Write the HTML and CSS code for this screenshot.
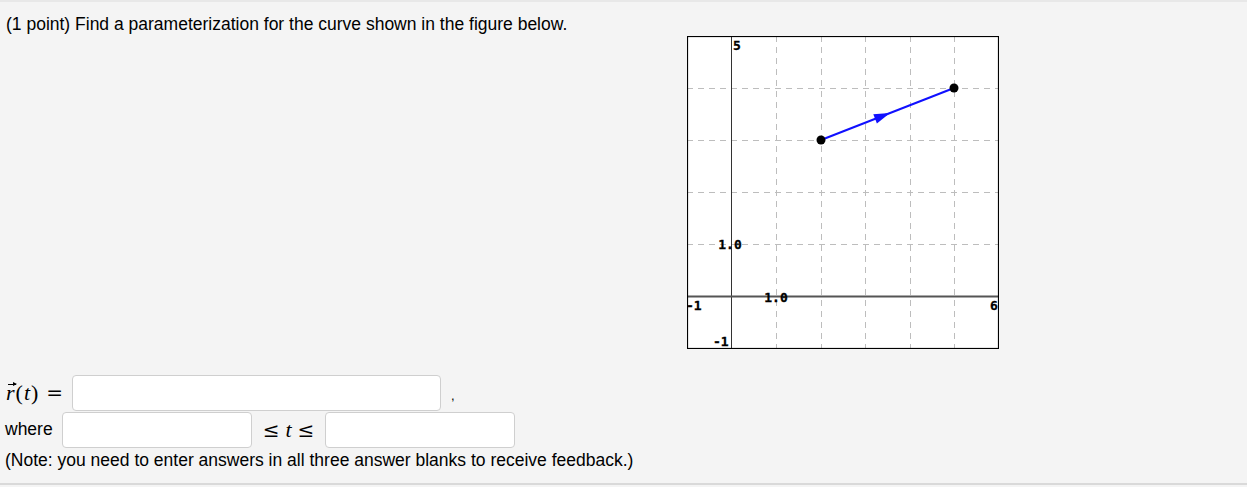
FILE: index.html
```html
<!DOCTYPE html>
<html>
<head>
<meta charset="utf-8">
<link rel="stylesheet" href="styles.css">
</head>
<body>
<div class="page">
  <p class="prompt">(1 point) Find a parameterization for the curve shown in the figure below.</p>
  <div class="figure">
    <svg width="312" height="313" viewBox="0 0 312 313">
      <rect x="0.5" y="0.5" width="311" height="312" fill="#fff"/>
      <g stroke="#bdbdbd" stroke-width="1" stroke-dasharray="6,5">
        <line x1="89.5" y1="0" x2="89.5" y2="312"/>
        <line x1="134.5" y1="0" x2="134.5" y2="312"/>
        <line x1="178.5" y1="0" x2="178.5" y2="312"/>
        <line x1="223.5" y1="0" x2="223.5" y2="312"/>
        <line x1="267.5" y1="0" x2="267.5" y2="312"/>
        <line x1="0" y1="52.5" x2="312" y2="52.5"/>
        <line x1="0" y1="104.5" x2="312" y2="104.5"/>
        <line x1="0" y1="156.5" x2="312" y2="156.5"/>
        <line x1="0" y1="208.5" x2="312" y2="208.5"/>
      </g>
      <line x1="44.5" y1="0" x2="44.5" y2="312" stroke="#333" stroke-width="1"/>
      <line x1="0" y1="260.5" x2="312" y2="260.5" stroke="#555" stroke-width="2"/>
      <rect x="0.5" y="0.5" width="311" height="312" fill="none" stroke="#000" stroke-width="1.2"/>
      <g font-family="DejaVu Sans Mono, monospace" font-weight="bold" font-size="13" fill="#000" stroke="#000" stroke-width="0.3">
        <text x="46" y="14">5</text>
        <text x="43" y="213" text-anchor="middle">1.0</text>
        <text x="89" y="266" text-anchor="middle">1.0</text>
        <text x="-1" y="274">-1</text>
        <text x="303" y="274">6</text>
        <text x="26" y="310">-1</text>
      </g>
      <line x1="134" y1="104" x2="267" y2="52" stroke="#1010ff" stroke-width="2"/>
      <polygon points="203,77 186.3,78.2 189.9,87.5" fill="#1010ff"/>
      <circle cx="134" cy="104" r="4.5" fill="#000"/>
      <circle cx="267" cy="52" r="4.5" fill="#000"/>
    </svg>
  </div>
  <div class="row row-r">
    <span class="math lhs"><span class="vec">r</span>(<i>t</i>)<span class="op eq">=</span></span>
    <input class="field field-wide" type="text">
    <span class="comma">,</span>
  </div>
  <div class="row row-where">
    <span class="label">where</span>
    <input class="field field-half" type="text">
    <span class="math ineq"><span class="op">≤</span><i>t</i><span class="op">≤</span></span>
    <input class="field field-half" type="text">
  </div>
  <p class="note">(Note: you need to enter answers in all three answer blanks to receive feedback.)</p>
</div>
</body>
</html>
```

FILE: styles.css
```css
html, body {
  margin: 0;
  padding: 0;
}
body {
  background: #f4f4f4;
  font-family: "Liberation Sans", Arial, sans-serif;
  font-size: 17.5px;
  color: #000;
  width: 1247px;
  height: 487px;
  overflow: hidden;
}
.page {
  border-top: 2px solid #e8e8e8;
  border-bottom: 2px solid #d9d9d9;
  height: 481px;
  box-sizing: content-box;
  padding: 0 0 0 5px;
}
.prompt {
  margin: 0;
  padding-top: 12px;
  line-height: 20px;
  padding-left: 1px;
}
.figure {
  margin-left: 682px;
  margin-top: 2px;
  height: 313px;
}
.figure svg {
  display: block;
}
.row {
  display: flex;
  align-items: center;
}
.row-r {
  margin-top: 26px;
  height: 36px;
}
.row-where {
  height: 37px;
}
.math {
  font-family: "Liberation Serif", "DejaVu Serif", serif;
  font-size: 22px;
  white-space: nowrap;
}
.math i {
  font-style: italic;
}
.op {
  font-family: "DejaVu Serif", serif;
  font-size: 20px;
}
.lhs {
  width: 57px;
  padding-left: 1px;
}
.vec {
  position: relative;
  font-style: italic;
  display: inline-block;
  margin-right: 1px;
}
.vec::before {
  content: "";
  position: absolute;
  left: 2px;
  top: 4px;
  width: 8px;
  height: 1.3px;
  background: #000;
}
.vec::after {
  content: "";
  position: absolute;
  left: 7px;
  top: 2px;
  width: 0;
  height: 0;
  border-left: 4px solid #000;
  border-top: 2.5px solid transparent;
  border-bottom: 2.5px solid transparent;
}
.math i {
  padding: 0 1px;
}
.eq {
  margin-left: 8px;
}
.field {
  box-sizing: border-box;
  height: 36px;
  background: #fff;
  border: 1px solid #cfcfcf;
  border-radius: 4px;
  margin: 0;
  padding: 4px 8px;
  font-size: 16px;
}
.field-wide {
  width: 369px;
  margin-left: 9px;
}
.comma {
  margin-left: 10px;
  font-size: 13px;
  margin-top: 4px;
}
.label {
  width: 57px;
}
.field-half {
  width: 190px;
}
.ineq {
  width: 73px;
  text-align: center;
}
.ineq i {
  margin: 0 5px;
}
.note {
  margin: 0;
  padding-top: 1px;
  line-height: 22px;
}
```
